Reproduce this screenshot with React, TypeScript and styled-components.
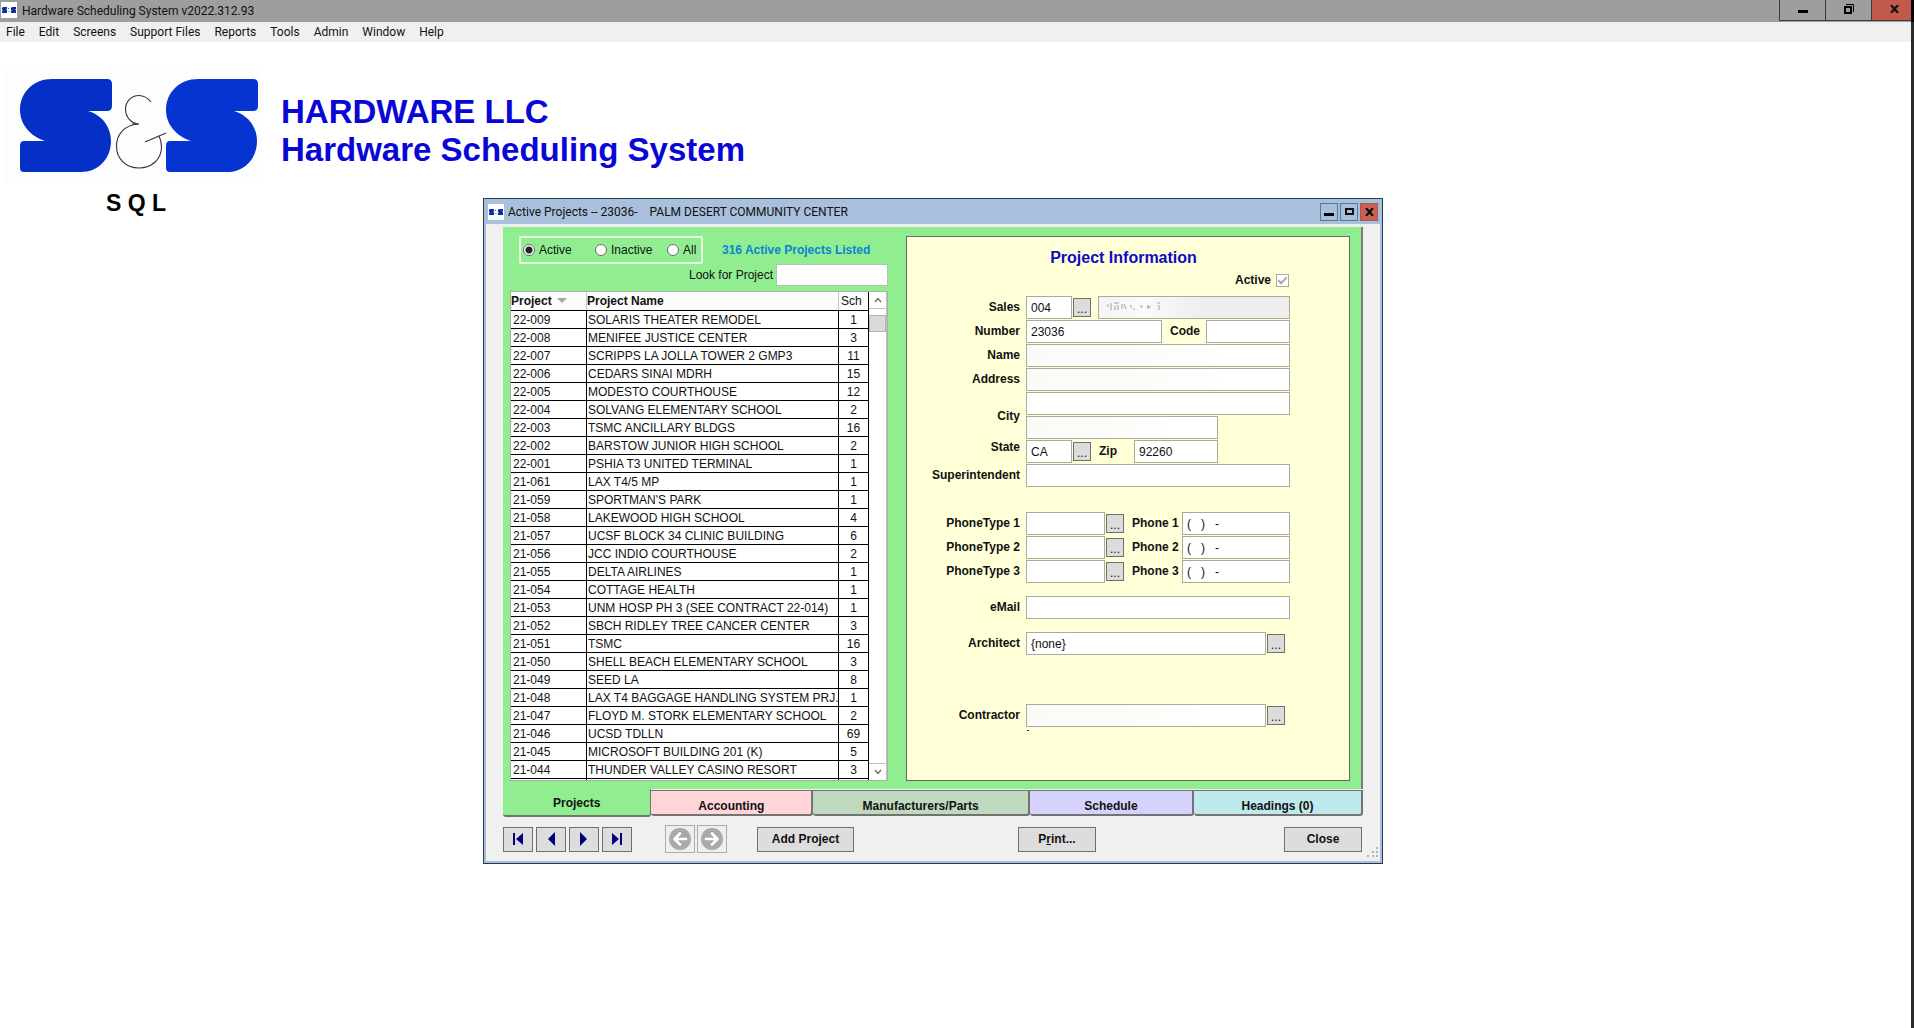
import React, { useState } from "react";
import styled, { createGlobalStyle, css } from "styled-components";

const GlobalStyle = createGlobalStyle`
  *, *::before, *::after { box-sizing: border-box; }
  body { margin: 0; background: #fff; }
  button, input { font: inherit; color: inherit; margin: 0; }
`;

const ui = `"Liberation Sans", Arial, sans-serif`;
const system = `"Segoe UI", Roboto, "Noto Sans", sans-serif`;

const Screen = styled.div`
  display: flex;
  min-height: 100vh;
  font: 12px/14px ${ui};
  color: #111;
`;
const AppWindow = styled.div`
  flex: 1;
  min-width: 0;
  display: flex;
  flex-direction: column;
`;
const ScreenEdge = styled.div`
  width: 3px;
  background: linear-gradient(#000 22px, #2b2b2b 22px);
`;

/* ---------- main window ---------- */
const TitleBar = styled.header`
  display: flex;
  height: 22px;
  background: #9e9e9e;
  padding-left: 1px;
  font: 12px/22px ${system};
`;
const AppTitle = styled.h1`
  flex: 1;
  margin: 0;
  padding-left: 5px;
  font: inherit;
`;
const IconSlot = styled.span`
  display: flex;
  padding-top: 2px;
`;
const CaptionButtons = styled.div`
  display: flex;
  height: 21px;
  border-bottom: 1px solid #3c3c3c;
`;
const CaptionButton = styled.button<{ $close?: boolean }>`
  width: 46px;
  padding: 0 0 2px;
  border: 0;
  border-left: 1px solid #3c3c3c;
  background: ${(p) => (p.$close ? "#c1594d" : "transparent")};
  display: grid;
  place-items: center;
  ${(p) => p.$close && "width: 40px; padding-left: 6px;"}
`;
const MenuBar = styled.nav`
  display: flex;
  gap: 14px;
  height: 20px;
  padding-left: 6px;
  background: #f0f0f0;
`;
const MenuItem = styled.button`
  border: 0;
  padding: 0;
  background: none;
  font: 12px/20px ${system};
`;

const Desktop = styled.main`
  position: relative;
  flex: 1;
  background: #fff;
`;
const Brand = styled.section`
  display: flex;
  gap: 19px;
  padding: 24px 0 0 4px;
`;
const LogoColumn = styled.div`
  display: flex;
  flex-direction: column;
  width: 258px;
`;
const Edition = styled.span`
  padding: 5px 0 0 102px;
  font: bold 23px/28px ${ui};
  color: #000;
`;
const BrandName = styled.h2`
  margin: 0;
  padding-top: 27px;
  font: bold 33px/38px ${ui};
  color: #0a06d6;
`;

/* ---------- child window ---------- */
const ChildWindow = styled.section`
  position: absolute;
  left: 483px;
  top: 156px;
  width: 900px;
  border: 1px solid #25394c;
  padding: 0 2px 2px;
  background: #a8c0dc;
`;
const ChildTitle = styled.header`
  display: flex;
  align-items: center;
  gap: 2px;
  height: 25px;
  padding: 0 2px;
  font: 12px/24px ${system};
`;
const ChildCaption = styled.h2`
  flex: 1;
  margin: 0;
  padding-left: 2px;
  font: inherit;
  white-space: pre;
`;
const ChildButton = styled.button<{ $close?: boolean }>`
  width: 18px;
  height: 18px;
  padding: 0;
  border: 1px solid ${(p) => (p.$close ? "#a8584c" : "#56779b")};
  background: ${(p) => (p.$close ? "#c96153" : "transparent")};
  display: grid;
  place-items: center;
`;
const ChildBody = styled.div`
  padding: 3px 17px 8px;
  background: #f0f0f0;
`;
const Page = styled.div`
  display: flex;
  align-items: stretch;
  gap: 18px;
  padding: 9px 11px 8px 7px;
  background: #90ee90;
  border-right: 2px solid #748474;
`;

/* ---------- project list ---------- */
const ListPane = styled.div`
  width: 378px;
  display: flex;
  flex-direction: column;
`;
const FilterRow = styled.div`
  display: flex;
  align-items: center;
  padding-left: 9px;
  gap: 19px;
`;
const FilterBox = styled.fieldset`
  display: grid;
  grid-template-columns: 72px 72px 1fr;
  align-items: center;
  width: 184px;
  height: 28px;
  margin: 0;
  padding: 0 2px;
  border: 2px solid #e2fbe2;
  border-radius: 2px;
`;
const RadioLabel = styled.label`
  display: flex;
  align-items: center;
  gap: 4px;
`;
const Radio = styled.input`
  appearance: none;
  width: 12px;
  height: 12px;
  border: 1px solid #6e6e6e;
  border-radius: 50%;
  background: #fff;
  &:checked {
    background: radial-gradient(circle, #222 3px, #fff 4px);
  }
`;
const ListCount = styled.span`
  font-weight: bold;
  color: #0a84d6;
`;
const SearchRow = styled.label`
  display: flex;
  justify-content: flex-end;
  align-items: center;
  gap: 3px;
  margin-bottom: 5px;
`;
const SearchInput = styled.input`
  width: 112px;
  height: 22px;
  border: 1px solid #b4c4b4;
  padding: 0 4px;
  background: #fff;
`;
const Listing = styled.div`
  display: flex;
  height: 490px;
  border: 1px solid #a5b5a5;
  background: #fff;
  overflow: hidden;
`;
const Table = styled.table`
  width: 358px;
  table-layout: fixed;
  border-collapse: separate;
  border-spacing: 0;
  border-right: 1px solid #000;
  align-self: flex-start;
`;
const HeadCell = styled.th<{ $width: number; $plain?: boolean }>`
  width: ${(p) => p.$width}px;
  height: 18px;
  padding: 0;
  border-left: 1px solid #c8c8c8;
  background: #fcfcfc;
  text-align: left;
  white-space: nowrap;
  &:first-child { border-left: 0; }
  ${(p) => p.$plain && "font-weight: normal; padding-left: 2px;"}
`;
const SortArrow = styled.span`
  display: inline-block;
  margin: 0 0 2px 5px;
  border: 5px solid transparent;
  border-top-color: #a8a8a8;
  border-bottom: 0;
`;
const Cell = styled.td<{ $center?: boolean }>`
  height: 18px;
  padding: 0 0 0 1px;
  border-top: 1px solid #000;
  border-left: 1px solid #000;
  line-height: 16px;
  white-space: nowrap;
  &:first-child { border-left: 0; padding-left: 2px; }
  ${(p) => p.$center && "text-align: center; padding: 0;"}
`;
const ScrollBar = styled.div`
  flex: 1;
  display: flex;
  flex-direction: column;
  border-right: 1px solid #c0c0c0;
`;
const ScrollButton = styled.button<{ $down?: boolean }>`
  height: 17px;
  padding: 0;
  border: 0 solid #c0c0c0;
  ${(p) => (p.$down ? "border-top-width: 1px; margin-top: auto;" : "border-bottom-width: 1px;")}
  background: #fff;
  display: grid;
  place-items: center;
`;
const ScrollThumb = styled.div`
  height: 17px;
  margin-top: 6px;
  border: 1px solid #b4b4b4;
  background: #dadada;
`;

/* ---------- project information ---------- */
const InfoPane = styled.form`
  flex: 1;
  border: 1px solid #66705a;
  padding-top: 10px;
  background: #ffffd8;
`;
const InfoTitle = styled.h3`
  margin: 0;
  padding-right: 9px;
  font: bold 16px/22px ${ui};
  text-align: center;
  color: #0c0cc4;
`;
const ActiveRow = styled.label`
  display: flex;
  justify-content: flex-end;
  align-items: center;
  gap: 5px;
  height: 27px;
  padding: 0 60px 5px 0;
  font-weight: bold;
`;
const Check = styled.input`
  appearance: none;
  width: 13px;
  height: 13px;
  border: 1px solid #a8a8a8;
  background: #fff;
  display: grid;
  place-items: center;
  &:checked::before {
    content: "";
    width: 5px;
    height: 9px;
    margin-bottom: 2px;
    border: solid #a8a8a8;
    border-width: 0 2px 2px 0;
    transform: rotate(45deg);
  }
`;
const Fields = styled.div<{ $space?: number }>`
  display: grid;
  grid-template-columns: 113px 264px;
  grid-auto-rows: 23px;
  gap: 1px 6px;
  margin-top: ${(p) => p.$space ?? 0}px;
`;
const Label = styled.label<{ $place?: "top" | "between" }>`
  grid-column: 1;
  align-self: center;
  text-align: right;
  font-weight: bold;
  padding-bottom: 2px;
  white-space: nowrap;
  ${(p) => p.$place === "top" && "align-self: start;"}
  ${(p) => p.$place === "between" && "grid-row: 5 / span 2; padding: 0;"}
`;
const Line = styled.div<{ $row?: number }>`
  grid-column: 2;
  display: flex;
  align-items: center;
  ${(p) => p.$row && `grid-row: ${p.$row};`}
`;
const smudge = css`
  background-image: linear-gradient(100deg, #fafaf9, #fcfcfb 50%, #fff 75%);
`;
const Field = styled.input<{ $width?: number; $smudge?: boolean }>`
  width: ${(p) => (p.$width ? `${p.$width}px` : "100%")};
  height: 23px;
  border: 1px solid #aaaaa0;
  padding: 0 4px;
  background-color: #fff;
  ${(p) => p.$smudge && smudge}
`;
const Masked = styled.span`
  position: relative;
  display: flex;
  margin-left: 7px;
  flex: 1;
  & > input {
    background: linear-gradient(95deg, #f4f4f4, #fafafa 25%, #eeeeee 55%);
  }
  & > svg { position: absolute; left: 8px; top: 4px; }
`;
const Browse = styled.button`
  width: 18px;
  height: 19px;
  margin-left: 1px;
  padding: 0;
  border: 1px solid #70706a;
  background: #dcdcdc;
  line-height: 20px;
`;
const InlineLabel = styled.label<{ $width: number }>`
  width: ${(p) => p.$width}px;
  padding: 0 0 2px 8px;
  font-weight: bold;
`;
const Residue = styled.i`
  display: block;
  width: 2px;
  height: 1px;
  margin: 3px 0 0 120px;
  background: #333;
`;

/* ---------- tabs and actions ---------- */
const Tabs = styled.div`
  display: flex;
  height: 28px;
`;
const Tab = styled.button<{ $tint: string; $basis: number; $active?: boolean }>`
  flex: ${(p) => p.$basis} 1 0;
  height: 26px;
  margin-top: 1px;
  padding: 6px 0 0;
  border: 0 solid #737373;
  border-width: 1px 2px 2px 0;
  border-radius: 0 0 3px 3px;
  background: ${(p) => p.$tint};
  font-weight: bold;
  ${(p) =>
    p.$active &&
    "height: 28px; margin-top: 0; padding: 2px 0 0; border-top: 0; border-right-width: 1px;"}
`;
const ActionBar = styled.div`
  display: flex;
  align-items: center;
  height: 28px;
  margin-top: 8px;
  padding-right: 1px;
`;
const ButtonGroup = styled.div<{ $gap: number }>`
  display: flex;
  gap: ${(p) => p.$gap}px;
`;
const HistoryGroup = styled(ButtonGroup)`
  margin-left: 33px;
`;
const Action = styled.button<{ $width: number }>`
  width: ${(p) => p.$width}px;
  height: 25px;
  padding: 0;
  border: 1px solid #707070;
  background: #dddddd;
  font-weight: bold;
  display: grid;
  place-items: center;
`;
const History = styled(Action)`
  height: 28px;
  border-color: #adadad;
  background: #efefef;
`;
const AddAction = styled(Action)`
  margin-left: 30px;
`;
const PrintAction = styled(Action)`
  margin-left: 164px;
`;
const CloseAction = styled(Action)`
  margin-left: auto;
`;
const Grip = styled.svg`
  position: absolute;
  right: 4px;
  bottom: 5px;
`;

/* ---------- drawings ---------- */
const letterS =
  "M48 13H103Q108 13 108 18V40Q108 45 103 45H84C98 49 107 61 107 75C107 93 94 106 77 106H20Q16 106 16 102V80Q16 75 20 75H41C26 70 16 58 16 44C16 26 30 13 48 13Z";

const Logo = () => (
  <svg width="258" height="118" viewBox="0 0 258 118" role="img" aria-label="S&S">
    <rect width="258" height="118" fill="#fdfdfd" />
    <path d={letterS} fill="#0430c8" />
    <path d={letterS} fill="#0634d0" transform="translate(146 0)" />
    <g fill="none" stroke="#333" strokeWidth="1.1">
      <path d="M147 36C143 31 139 29.500 135 29.500C127 29.500 121.500 36 121.500 43C121.500 51 127 57 134 58C121 59 112.500 68 112.500 80C112.500 93 122 102 135 102C148 102 157.500 93 157.500 81C157.500 77 156.500 73 155 70" />
      <path d="M141 76L162 67M128 58H135" />
    </g>
  </svg>
);

const SmallIcon = () => (
  <svg width="16" height="16" viewBox="0 0 16 16" aria-hidden="true">
    <rect width="16" height="16" fill="#fff" />
    <path d="M2 5h4v2h-1l1 1v3h-5v-2h1l-1-1v-2zM11 5h4v2h-1l1 1v3h-5v-2h1l-1-1v-2z" fill="#0a2fa8" />
    <path d="M7 6h1v1h-1zM7.500 9h1v1h-1z" fill="#556" />
  </svg>
);

const CrossIcon = () => (
  <svg width="9" height="8" viewBox="0 0 9 8" aria-hidden="true">
    <path d="M1 0L8 8M8 0L1 8" stroke="#111" strokeWidth="2.200" />
  </svg>
);

const DashIcon = () => (
  <svg width="10" height="10" viewBox="0 0 10 10" aria-hidden="true">
    <path d="M0 6h10v3H0z" fill="#000" />
  </svg>
);

const RestoreIcon = () => (
  <svg width="10" height="10" viewBox="0 0 10 10" aria-hidden="true">
    <path d="M1 3h6v6h-6z" fill="none" stroke="#000" strokeWidth="2" />
    <path d="M2 .5h7.500v7.500" fill="none" stroke="#000" />
  </svg>
);

const MaxIcon = () => (
  <svg width="9" height="7" viewBox="0 0 9 7" aria-hidden="true">
    <path d="M1 1h7v5h-7z" fill="none" stroke="#111" strokeWidth="2" />
  </svg>
);

const Chevron = ({ down }: { down?: boolean }) => (
  <svg width="8" height="6" viewBox="0 0 8 6" aria-hidden="true">
    <path d={down ? "M1 1L4 4.500L7 1" : "M1 5L4 1.500L7 5"} fill="none" stroke="#666" strokeWidth="1.200" />
  </svg>
);

const navShapes = {
  first: "M0 1h2v12h-2zM10 1v12L3 7z",
  previous: "M9 0v14L2 7z",
  next: "M1 0v14L8 7z",
  last: "M0 1v12L7 7zM8 1h2v12h-2z",
};
const NavIcon = ({ shape }: { shape: keyof typeof navShapes }) => (
  <svg width="10" height="14" viewBox="0 0 10 14" aria-hidden="true">
    <path d={navShapes[shape]} fill="#00007c" />
  </svg>
);

const RoundArrow = ({ forward }: { forward?: boolean }) => (
  <svg width="22" height="22" viewBox="0 0 22 22" aria-hidden="true">
    <circle cx="11" cy="11" r="11" fill="#a9a9a9" />
    <path
      d={forward ? "M5 11h11M11 5.500l5.500 5.500l-5.500 5.500" : "M17 11h-11M11 5.500l-5.500 5.500l5.500 5.500"}
      fill="none"
      stroke="#fff"
      strokeWidth="2.600"
      strokeLinecap="round"
      strokeLinejoin="round"
    />
  </svg>
);

/* ---------- data ---------- */
const menus = ["File", "Edit", "Screens", "Support Files", "Reports", "Tools", "Admin", "Window", "Help"];

const projects: [string, string, number][] = [
  ["22-009", "SOLARIS THEATER REMODEL", 1],
  ["22-008", "MENIFEE JUSTICE CENTER", 3],
  ["22-007", "SCRIPPS LA JOLLA TOWER 2 GMP3", 11],
  ["22-006", "CEDARS SINAI MDRH", 15],
  ["22-005", "MODESTO COURTHOUSE", 12],
  ["22-004", "SOLVANG ELEMENTARY SCHOOL", 2],
  ["22-003", "TSMC ANCILLARY BLDGS", 16],
  ["22-002", "BARSTOW JUNIOR HIGH SCHOOL", 2],
  ["22-001", "PSHIA T3 UNITED TERMINAL", 1],
  ["21-061", "LAX T4/5 MP", 1],
  ["21-059", "SPORTMAN'S PARK", 1],
  ["21-058", "LAKEWOOD HIGH SCHOOL", 4],
  ["21-057", "UCSF BLOCK 34 CLINIC BUILDING", 6],
  ["21-056", "JCC INDIO COURTHOUSE", 2],
  ["21-055", "DELTA AIRLINES", 1],
  ["21-054", "COTTAGE HEALTH", 1],
  ["21-053", "UNM HOSP PH 3 (SEE CONTRACT 22-014)", 1],
  ["21-052", "SBCH RIDLEY TREE CANCER CENTER", 3],
  ["21-051", "TSMC", 16],
  ["21-050", "SHELL BEACH ELEMENTARY SCHOOL", 3],
  ["21-049", "SEED LA", 8],
  ["21-048", "LAX T4 BAGGAGE HANDLING SYSTEM PRJ.", 1],
  ["21-047", "FLOYD M. STORK ELEMENTARY SCHOOL", 2],
  ["21-046", "UCSD TDLLN", 69],
  ["21-045", "MICROSOFT BUILDING 201 (K)", 5],
  ["21-044", "THUNDER VALLEY CASINO RESORT", 3],
];

const tabs = [
  { name: "Projects", tint: "#90ee90", basis: 149 },
  { name: "Accounting", tint: "#ffd5d7", basis: 162 },
  { name: "Manufacturers/Parts", tint: "#bfd9bf", basis: 217 },
  { name: "Schedule", tint: "#d5d3fc", basis: 164 },
  { name: "Headings (0)", tint: "#beeaeb", basis: 169 },
];

const ProjectList = () => {
  const [filter, setFilter] = useState("Active");
  return (
    <ListPane>
      <FilterRow>
        <FilterBox aria-label="Status">
          {["Active", "Inactive", "All"].map((name) => (
            <RadioLabel key={name}>
              <Radio type="radio" name="status" checked={filter === name} onChange={() => setFilter(name)} />
              {name}
            </RadioLabel>
          ))}
        </FilterBox>
        <ListCount>316 Active Projects Listed</ListCount>
      </FilterRow>
      <SearchRow>
        Look for Project
        <SearchInput type="text" />
      </SearchRow>
      <Listing>
        <Table>
          <thead>
            <tr>
              <HeadCell $width={75}>
                Project
                <SortArrow />
              </HeadCell>
              <HeadCell $width={252}>Project Name</HeadCell>
              <HeadCell $width={30} $plain>Sch</HeadCell>
            </tr>
          </thead>
          <tbody>
            {projects.map(([number, name, count]) => (
              <tr key={number}>
                <Cell>{number}</Cell>
                <Cell>{name}</Cell>
                <Cell $center>{count}</Cell>
              </tr>
            ))}
            <tr>
              <Cell />
              <Cell />
              <Cell />
            </tr>
          </tbody>
        </Table>
        <ScrollBar>
          <ScrollButton aria-label="Scroll up">
            <Chevron />
          </ScrollButton>
          <ScrollThumb />
          <ScrollButton $down aria-label="Scroll down">
            <Chevron down />
          </ScrollButton>
        </ScrollBar>
      </Listing>
    </ListPane>
  );
};

const BrowseButton = ({ what }: { what: string }) => (
  <Browse type="button" aria-label={`Browse ${what}`}>
    ...
  </Browse>
);

const ProjectInfo = () => (
  <InfoPane>
    <InfoTitle>Project Information</InfoTitle>
    <ActiveRow>
      Active
      <Check type="checkbox" defaultChecked disabled />
    </ActiveRow>
    <Fields>
      <Label htmlFor="sales">Sales</Label>
      <Line>
        <Field id="sales" $width={46} defaultValue="004" />
        <BrowseButton what="sales" />
        <Masked>
          <Field aria-label="Sales name" readOnly />
          <svg width="60" height="14" viewBox="0 0 60 14" aria-hidden="true">
            <path
              d="M2 4v3M5 3v7M8 3h5M9 6v4M12 5v5M16 4v5M18 4l2 5M25 5v3M28 8v2M34 6h2v2M42 5v4M41 7h4M51 3h3M53 5v5"
              fill="none"
              stroke="#8c8c8c"
              strokeOpacity=".8"
            />
          </svg>
        </Masked>
      </Line>
      <Label htmlFor="number">Number</Label>
      <Line>
        <Field id="number" $width={136} defaultValue="23036" />
        <InlineLabel htmlFor="code" $width={44}>Code</InlineLabel>
        <Field id="code" $width={84} />
      </Line>
      <Label htmlFor="name">Name</Label>
      <Line>
        <Field id="name" $smudge />
      </Line>
      <Label htmlFor="address">Address</Label>
      <Line>
        <Field id="address" $smudge />
      </Line>
      <Line $row={5}>
        <Field aria-label="Address line 2" />
      </Line>
      <Label htmlFor="city" $place="between">City</Label>
      <Line $row={6}>
        <Field id="city" $width={192} $smudge />
      </Line>
      <Label htmlFor="state" $place="top">State</Label>
      <Line>
        <Field id="state" $width={46} defaultValue="CA" />
        <BrowseButton what="state" />
        <InlineLabel htmlFor="zip" $width={43}>Zip</InlineLabel>
        <Field id="zip" $width={84} defaultValue="92260" />
      </Line>
      <Label htmlFor="super">Superintendent</Label>
      <Line>
        <Field id="super" />
      </Line>
    </Fields>
    <Fields $space={25}>
      {[1, 2, 3].map((n) => (
        <React.Fragment key={n}>
          <Label htmlFor={`type${n}`}>PhoneType {n}</Label>
          <Line>
            <Field id={`type${n}`} $width={79} />
            <BrowseButton what={`phone type ${n}`} />
            <InlineLabel htmlFor={`phone${n}`} $width={58}>Phone {n}</InlineLabel>
            <Field id={`phone${n}`} $width={108} defaultValue={"(\u00a0\u00a0\u00a0)\u00a0\u00a0\u00a0-"} />
          </Line>
        </React.Fragment>
      ))}
    </Fields>
    <Fields $space={13}>
      <Label htmlFor="email">eMail</Label>
      <Line>
        <Field id="email" />
      </Line>
    </Fields>
    <Fields $space={13}>
      <Label htmlFor="architect">Architect</Label>
      <Line>
        <Field id="architect" $width={240} defaultValue="{none}" />
        <BrowseButton what="architect" />
      </Line>
    </Fields>
    <Fields $space={49}>
      <Label htmlFor="contractor">Contractor</Label>
      <Line>
        <Field id="contractor" $width={240} $smudge />
        <BrowseButton what="contractor" />
      </Line>
    </Fields>
    <Residue />
  </InfoPane>
);

export default function App() {
  return (
    <Screen>
      <GlobalStyle />
      <AppWindow>
        <TitleBar>
          <IconSlot>
            <SmallIcon />
          </IconSlot>
          <AppTitle>Hardware Scheduling System v2022.312.93</AppTitle>
          <CaptionButtons>
            <CaptionButton aria-label="Minimize"><DashIcon /></CaptionButton>
            <CaptionButton aria-label="Restore"><RestoreIcon /></CaptionButton>
            <CaptionButton $close aria-label="Close"><CrossIcon /></CaptionButton>
          </CaptionButtons>
        </TitleBar>
        <MenuBar>
          {menus.map((name) => (
            <MenuItem key={name}>{name}</MenuItem>
          ))}
        </MenuBar>
        <Desktop>
          <Brand>
            <LogoColumn>
              <Logo />
              <Edition>S Q L</Edition>
            </LogoColumn>
            <BrandName>
              HARDWARE LLC
              <br />
              Hardware Scheduling System
            </BrandName>
          </Brand>
          <ChildWindow>
            <ChildTitle>
              <SmallIcon />
              <ChildCaption>{"Active Projects -- 23036-    PALM DESERT COMMUNITY CENTER"}</ChildCaption>
              <ChildButton aria-label="Minimize"><DashIcon /></ChildButton>
              <ChildButton aria-label="Maximize"><MaxIcon /></ChildButton>
              <ChildButton $close aria-label="Close"><CrossIcon /></ChildButton>
            </ChildTitle>
            <ChildBody>
              <Page>
                <ProjectList />
                <ProjectInfo />
              </Page>
              <Tabs role="tablist">
                {tabs.map((tab, index) => (
                  <Tab
                    key={tab.name}
                    role="tab"
                    aria-selected={index === 0}
                    $tint={tab.tint}
                    $basis={tab.basis}
                    $active={index === 0}
                  >
                    {tab.name}
                  </Tab>
                ))}
              </Tabs>
              <ActionBar>
                <ButtonGroup $gap={3}>
                  <Action $width={30} aria-label="First"><NavIcon shape="first" /></Action>
                  <Action $width={30} aria-label="Previous"><NavIcon shape="previous" /></Action>
                  <Action $width={30} aria-label="Next"><NavIcon shape="next" /></Action>
                  <Action $width={30} aria-label="Last"><NavIcon shape="last" /></Action>
                </ButtonGroup>
                <HistoryGroup $gap={2}>
                  <History $width={30} disabled aria-label="Back"><RoundArrow /></History>
                  <History $width={30} disabled aria-label="Forward"><RoundArrow forward /></History>
                </HistoryGroup>
                <AddAction $width={97}>Add Project</AddAction>
                <PrintAction $width={78}>
                  <span>P<u>r</u>int...</span>
                </PrintAction>
                <CloseAction $width={78}>Close</CloseAction>
              </ActionBar>
            </ChildBody>
            <Grip width="11" height="11" viewBox="0 0 11 11" aria-hidden="true">
              <path d="M9 0h2v2h-2zM5 4h2v2h-2zM9 4h2v2h-2zM0 8h2v2h-2zM5 8h2v2h-2zM9 8h2v2h-2z" fill="#b4b4b4" />
            </Grip>
          </ChildWindow>
        </Desktop>
      </AppWindow>
      <ScreenEdge />
    </Screen>
  );
}
